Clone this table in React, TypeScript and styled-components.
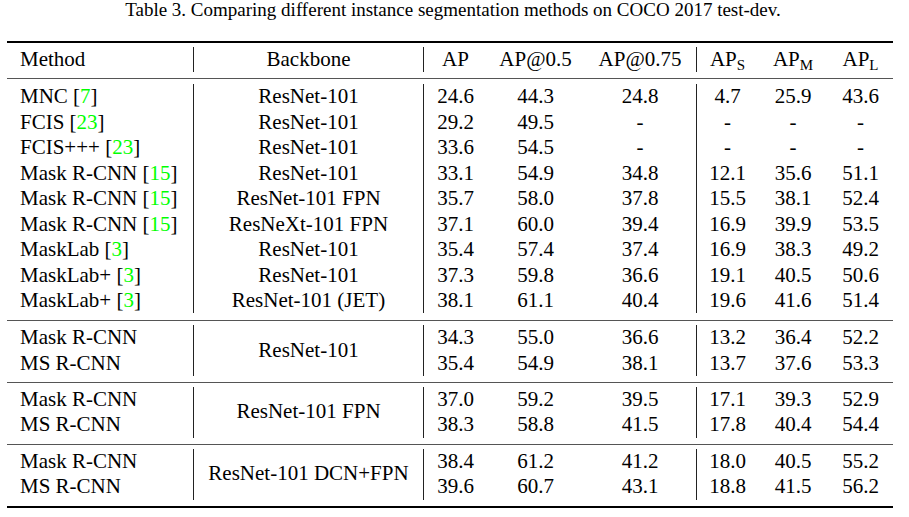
import styled, { createGlobalStyle } from 'styled-components'

interface Method {
  name: string
  cite?: string
}

interface ResultRow {
  method: Method
  backbone?: string
  scores: string[]
}

interface Group {
  backbone?: string
  rows: ResultRow[]
}

const GlobalStyle = createGlobalStyle`
  body {
    background: #fff;
    color: #000;
    font-family: 'Liberation Serif', 'Times New Roman', serif;
    margin: 0;
  }
`

const COLUMNS = '186px 230px 64px 97px 112px 62px 70px 65px'
const ROW = '25.45px'

const Page = styled.div`
  height: 517px;
  overflow: hidden;
  width: 909px;
`

const Caption = styled.p`
  font-size: 19px;
  height: 20px;
  line-height: 20px;
  margin: 0;
  padding-right: 3px;
  text-align: center;
`

const Table = styled.div`
  border-bottom: 2px solid #000;
  border-top: 2px solid #000;
  font-size: 21px;
  margin: 21px 16px 0 7px;
`

const Section = styled.div<{ $top: number; $bottom: number; $rule?: boolean }>`
  border-bottom: ${({ $rule }) => ($rule ? '1px solid #555' : 'none')};
  display: grid;
  grid-auto-rows: ${ROW};
  grid-template-columns: ${COLUMNS};
  line-height: ${ROW};
  padding: ${({ $top, $bottom }) => `${$top}px 0 ${$bottom}px`};
`

const Cell = styled.div<{ $left?: boolean; $bar?: boolean; $span?: number }>`
  align-items: center;
  border-left: ${({ $bar }) => ($bar ? '1px solid #222' : 'none')};
  display: flex;
  grid-row: ${({ $span }) => ($span ? `span ${$span}` : 'auto')};
  justify-content: ${({ $left }) => ($left ? 'flex-start' : 'center')};
  padding-left: ${({ $left }) => ($left ? '13px' : '0')};
  white-space: pre;
`

const Cite = styled.span`
  color: #00ff00;
`

const Sub = styled.sub`
  font-size: 15px;
  line-height: 0;
  vertical-align: -4px;
`

const bars = [false, false, true, false, false, true, false, false]

const m = (name: string, cite?: string): Method => ({ name, cite })

const groups: Group[] = [
  {
    rows: [
      { method: m('MNC', '7'), backbone: 'ResNet-101', scores: ['24.6', '44.3', '24.8', '4.7', '25.9', '43.6'] },
      { method: m('FCIS', '23'), backbone: 'ResNet-101', scores: ['29.2', '49.5', '-', '-', '-', '-'] },
      { method: m('FCIS+++', '23'), backbone: 'ResNet-101', scores: ['33.6', '54.5', '-', '-', '-', '-'] },
      { method: m('Mask R-CNN', '15'), backbone: 'ResNet-101', scores: ['33.1', '54.9', '34.8', '12.1', '35.6', '51.1'] },
      { method: m('Mask R-CNN', '15'), backbone: 'ResNet-101 FPN', scores: ['35.7', '58.0', '37.8', '15.5', '38.1', '52.4'] },
      { method: m('Mask R-CNN', '15'), backbone: 'ResNeXt-101 FPN', scores: ['37.1', '60.0', '39.4', '16.9', '39.9', '53.5'] },
      { method: m('MaskLab', '3'), backbone: 'ResNet-101', scores: ['35.4', '57.4', '37.4', '16.9', '38.3', '49.2'] },
      { method: m('MaskLab+', '3'), backbone: 'ResNet-101', scores: ['37.3', '59.8', '36.6', '19.1', '40.5', '50.6'] },
      { method: m('MaskLab+', '3'), backbone: 'ResNet-101 (JET)', scores: ['38.1', '61.1', '40.4', '19.6', '41.6', '51.4'] },
    ],
  },
  {
    backbone: 'ResNet-101',
    rows: [
      { method: m('Mask R-CNN'), scores: ['34.3', '55.0', '36.6', '13.2', '36.4', '52.2'] },
      { method: m('MS R-CNN'), scores: ['35.4', '54.9', '38.1', '13.7', '37.6', '53.3'] },
    ],
  },
  {
    backbone: 'ResNet-101 FPN',
    rows: [
      { method: m('Mask R-CNN'), scores: ['37.0', '59.2', '39.5', '17.1', '39.3', '52.9'] },
      { method: m('MS R-CNN'), scores: ['38.3', '58.8', '41.5', '17.8', '40.4', '54.4'] },
    ],
  },
  {
    backbone: 'ResNet-101 DCN+FPN',
    rows: [
      { method: m('Mask R-CNN'), scores: ['38.4', '61.2', '41.2', '18.0', '40.5', '55.2'] },
      { method: m('MS R-CNN'), scores: ['39.6', '60.7', '43.1', '18.8', '41.5', '56.2'] },
    ],
  },
]

const spacing = [
  { top: 5, bottom: 7 },
  { top: 4, bottom: 5.5 },
  { top: 4, bottom: 6 },
  { top: 4, bottom: 6 },
]

function MethodCell({ method }: { method: Method }) {
  return (
    <Cell $left>
      <span>
        {method.name}
        {method.cite && (
          <>
            {' ['}
            <Cite>{method.cite}</Cite>]
          </>
        )}
      </span>
    </Cell>
  )
}

function Row({ row, group, first }: { row: ResultRow; group: Group; first: boolean }) {
  return (
    <>
      <MethodCell method={row.method} />
      {group.backbone ? (
        first && (
          <Cell $bar $span={group.rows.length}>
            {group.backbone}
          </Cell>
        )
      ) : (
        <Cell $bar>{row.backbone}</Cell>
      )}
      {row.scores.map((score, i) => (
        <Cell key={i} $bar={bars[i + 2]}>
          {score}
        </Cell>
      ))}
    </>
  )
}

export default function App() {
  return (
    <Page>
      <GlobalStyle />
      <Caption>Table 3. Comparing different instance segmentation methods on COCO 2017 test-dev.</Caption>
      <Table>
        <Section $top={4} $bottom={6} $rule>
          <Cell $left>Method</Cell>
          <Cell $bar>Backbone</Cell>
          <Cell $bar>AP</Cell>
          <Cell>AP@0.5</Cell>
          <Cell>AP@0.75</Cell>
          <Cell $bar>
            <span>
              AP<Sub>S</Sub>
            </span>
          </Cell>
          <Cell>
            <span>
              AP<Sub>M</Sub>
            </span>
          </Cell>
          <Cell>
            <span>
              AP<Sub>L</Sub>
            </span>
          </Cell>
        </Section>
        {groups.map((group, gi) => (
          <Section
            key={gi}
            $top={spacing[gi].top}
            $bottom={spacing[gi].bottom}
            $rule={gi < groups.length - 1}
          >
            {group.rows.map((row, ri) => (
              <Row key={ri} row={row} group={group} first={ri === 0} />
            ))}
          </Section>
        ))}
      </Table>
    </Page>
  )
}
